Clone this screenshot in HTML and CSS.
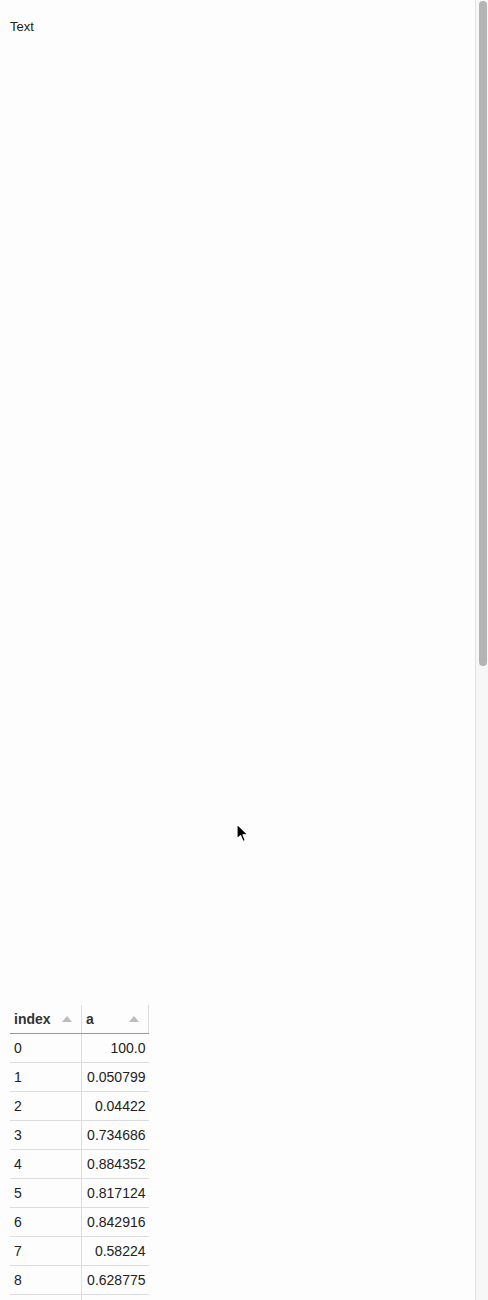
FILE: index.html
```html
<!DOCTYPE html>
<html lang="en">
<head>
    <meta charset="UTF-8">
    <meta name="viewport" content="width=device-width, initial-scale=1.0">
    <title>Text</title>
    <link rel="stylesheet" href="styles.css">
</head>
<body>
    <div class="janela">
        <div class="conteudo">
            <p class="texto">Text</p>

            <div class="area-vazia"></div>

            <table class="tabela">
                <thead>
                    <tr>
                        <th><span>index</span><i class="seta"></i></th>
                        <th><span>a</span><i class="seta"></i></th>
                    </tr>
                </thead>
                <tbody>
                    <tr><td>0</td><td class="num">100.0</td></tr>
                    <tr><td>1</td><td class="num">0.050799</td></tr>
                    <tr><td>2</td><td class="num">0.04422</td></tr>
                    <tr><td>3</td><td class="num">0.734686</td></tr>
                    <tr><td>4</td><td class="num">0.884352</td></tr>
                    <tr><td>5</td><td class="num">0.817124</td></tr>
                    <tr><td>6</td><td class="num">0.842916</td></tr>
                    <tr><td>7</td><td class="num">0.58224</td></tr>
                    <tr><td>8</td><td class="num">0.628775</td></tr>
                    <tr><td></td><td class="num"></td></tr>
                </tbody>
            </table>
        </div>

        <div class="rolagem">
            <div class="polegar"></div>
        </div>
    </div>

    <!-- ponteiro do mouse por cima da pagina -->
    <svg class="cursor" width="14" height="20" viewBox="0 0 14 20">
        <path d="M1 1 L1 16 L4.5 12.6 L7 18.5 L9.4 17.5 L7 11.8 L12 11.8 Z" fill="#000" stroke="#fff" stroke-width="1.2" stroke-linejoin="round"/>
    </svg>
</body>
</html>
```

FILE: styles.css
```css
html, body {
    margin: 0;
    padding: 0;
    height: 1300px;
    overflow: hidden;
}

body {
    font-family: 'Liberation Sans', Arial, sans-serif;
    background-color: #fdfdfd;
    color: #222;
    position: relative;
}

.janela {
    display: flex;
    height: 1300px;
}

.conteudo {
    flex: 1;
    padding-left: 10px;
    overflow: hidden;
}

.texto {
    margin: 19px 0 0 0;
    font-size: 13px;
    line-height: 16px;
}

.area-vazia {
    height: 970px;
}

.tabela {
    border-collapse: collapse;
    font-size: 14px;
    color: #222;
}

.tabela th {
    height: 28px;
    padding: 0 9px 0 4px;
    font-weight: bold;
    text-align: left;
    border-right: 1px solid #ddd;
    border-bottom: 1px solid #999;
    color: #333;
}

.tabela th:first-child {
    width: 58px;
}

.tabela th:last-child {
    width: 53px;
}

.tabela th span {
    float: left;
}

.seta {
    float: right;
    margin-top: 5px;
    width: 0;
    height: 0;
    border-left: 5px solid transparent;
    border-right: 5px solid transparent;
    border-bottom: 6px solid #bbb;
}

.tabela td {
    height: 28px;
    padding: 0 4px;
    border-bottom: 1px solid #ddd;
}

.tabela td:first-child {
    border-right: 1px solid #ddd;
}

.tabela td.num {
    text-align: right;
    padding-right: 3px;
}

.rolagem {
    width: 12px;
    border-left: 1px solid #e2e2e2;
    background-color: #f7f7f7;
    padding-top: 1px;
}

.polegar {
    width: 8px;
    height: 665px;
    margin-left: 3px;
    border-radius: 4px;
    background-color: #b4b4b4;
}

.cursor {
    position: absolute;
    left: 236px;
    top: 823px;
}
```
